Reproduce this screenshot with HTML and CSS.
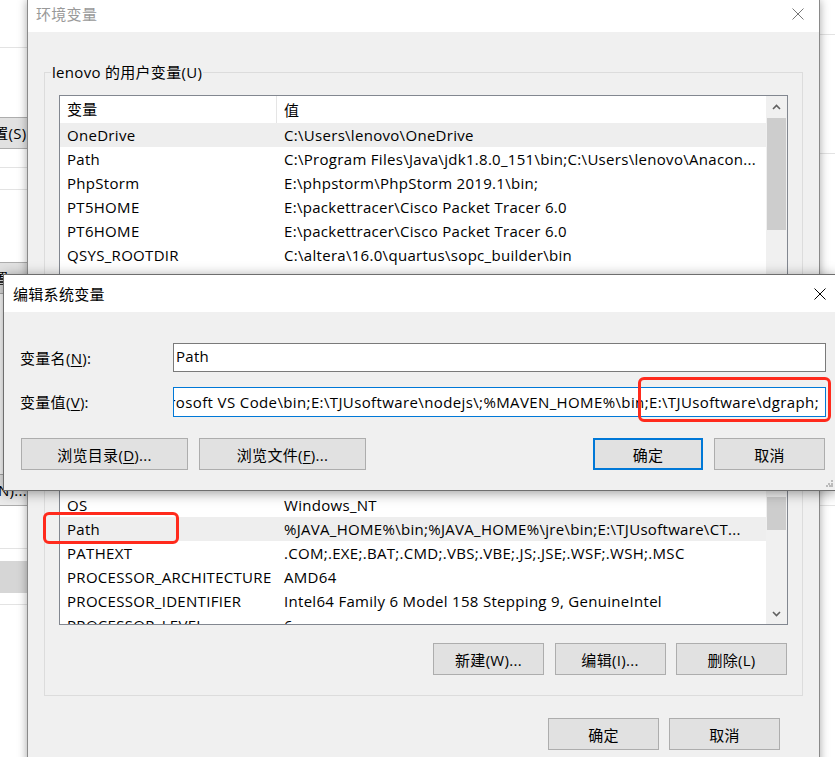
FILE: index.html
```html
<!DOCTYPE html>
<html lang="zh-CN">
<head>
  <meta charset="UTF-8">
  <title>环境变量</title>
  <link rel="stylesheet" href="styles.css">
</head>
<body>
  <!-- 系统属性 window, mostly hidden behind the dialogs -->
  <div class="backwin">
    <div class="back-left">
      <div class="bl-row bl-r1"></div>
      <div class="bl-gap bl-g1"></div>
      <div class="bl-btn"><span class="bl-s">设置(S)...</span></div>
      <div class="bl-row bl-r2"></div>
      <div class="bl-row bl-r3"></div>
      <div class="bl-gap bl-g2"></div>
      <div class="bl-btn"><span class="bl-s">设置(E)...</span></div>
      <div class="bl-gap bl-g3"></div>
      <div class="bl-btn bl-env"><span class="bl-n">环境变量(N)...</span></div>
      <div class="bl-row bl-r4"></div>
      <div class="bl-gap bl-g4"></div>
      <div class="bl-band"></div>
      <div class="bl-row bl-r5"></div>
    </div>
    <div class="back-right">
      <div class="br-row br-r1"></div>
      <div class="br-row br-r2"></div>
      <div class="br-row br-r3"></div>
    </div>
  </div>

  <!-- 环境变量 dialog -->
  <div class="envdlg">
    <div class="titlebar">
      <span class="title dim">环境变量</span>
      <svg class="close" width="12" height="12" viewBox="0 0 12 12"><path d="M0.5 0.5 L11.5 11.5 M11.5 0.5 L0.5 11.5" stroke="#777" stroke-width="1"/></svg>
    </div>

    <div class="group">
      <div class="group-title">lenovo 的用户变量(U)</div>
      <div class="listbox list-user">
        <div class="rows">
          <div class="row head"><div class="c1">变量</div><div class="c2">值</div></div>
          <div class="row sel"><div class="c1">OneDrive</div><div class="c2">C:\Users\lenovo\OneDrive</div></div>
          <div class="row"><div class="c1">Path</div><div class="c2">C:\Program Files\Java\jdk1.8.0_151\bin;C:\Users\lenovo\Anacon...</div></div>
          <div class="row"><div class="c1">PhpStorm</div><div class="c2">E:\phpstorm\PhpStorm 2019.1\bin;</div></div>
          <div class="row"><div class="c1">PT5HOME</div><div class="c2">E:\packettracer\Cisco Packet Tracer 6.0</div></div>
          <div class="row"><div class="c1">PT6HOME</div><div class="c2">E:\packettracer\Cisco Packet Tracer 6.0</div></div>
          <div class="row"><div class="c1">QSYS_ROOTDIR</div><div class="c2">C:\altera\16.0\quartus\sopc_builder\bin</div></div>
          <div class="row"><div class="c1">QUARTUS_ROOTDIR</div><div class="c2">C:\altera\16.0\quartus</div></div>
          <div class="row"><div class="c1">TEMP</div><div class="c2">C:\Users\lenovo\AppData\Local\Temp</div></div>
        </div>
        <div class="vscroll">
          <div class="arrow"><svg width="9" height="6" viewBox="0 0 9 6"><path d="M1 5 L4.5 1.5 L8 5" stroke="#606060" stroke-width="1.6" fill="none"/></svg></div>
          <div class="thumb thumb-user"></div>
        </div>
      </div>
      <div class="btnrow">
        <button class="btn">新建(N)...</button>
        <button class="btn">编辑(E)...</button>
        <button class="btn">删除(D)</button>
      </div>
    </div>

    <div class="group group-sys">
      <div class="group-title">系统变量(S)</div>
      <div class="listbox list-sys">
        <div class="rows">
          <div class="row head"><div class="c1">变量</div><div class="c2">值</div></div>
          <div class="row"><div class="c1">JAVA_HOME</div><div class="c2">C:\Program Files\Java\jdk1.8.0_151</div></div>
          <div class="row"><div class="c1">NUMBER_OF_PROCESSORS</div><div class="c2">4</div></div>
          <div class="row"><div class="c1">OS</div><div class="c2">Windows_NT</div></div>
          <div class="row sel"><div class="c1">Path</div><div class="c2">%JAVA_HOME%\bin;%JAVA_HOME%\jre\bin;E:\TJUsoftware\CT...</div></div>
          <div class="row"><div class="c1">PATHEXT</div><div class="c2">.COM;.EXE;.BAT;.CMD;.VBS;.VBE;.JS;.JSE;.WSF;.WSH;.MSC</div></div>
          <div class="row"><div class="c1">PROCESSOR_ARCHITECTURE</div><div class="c2">AMD64</div></div>
          <div class="row"><div class="c1">PROCESSOR_IDENTIFIER</div><div class="c2">Intel64 Family 6 Model 158 Stepping 9, GenuineIntel</div></div>
          <div class="row"><div class="c1">PROCESSOR_LEVEL</div><div class="c2">6</div></div>
        </div>
        <div class="vscroll">
          <div class="arrow"><svg width="9" height="6" viewBox="0 0 9 6"><path d="M1 5 L4.5 1.5 L8 5" stroke="#606060" stroke-width="1.6" fill="none"/></svg></div>
          <div class="thumb thumb-sys"></div>
          <div class="arrow arrow-down"><svg width="9" height="6" viewBox="0 0 9 6"><path d="M1 1 L4.5 4.5 L8 1" stroke="#606060" stroke-width="1.6" fill="none"/></svg></div>
        </div>
      </div>
      <div class="btnrow">
        <button class="btn">新建(W)...</button>
        <button class="btn">编辑(I)...</button>
        <button class="btn">删除(L)</button>
      </div>
    </div>

    <div class="dlg-buttons">
      <button class="btn">确定</button>
      <button class="btn">取消</button>
    </div>
  </div>

  <!-- 编辑系统变量 dialog -->
  <div class="editdlg">
    <div class="titlebar edit-titlebar">
      <span class="title">编辑系统变量</span>
      <svg class="close" width="12" height="12" viewBox="0 0 12 12"><path d="M0.5 0.5 L11.5 11.5 M11.5 0.5 L0.5 11.5" stroke="#000" stroke-width="1"/></svg>
    </div>
    <div class="editbody">
      <div class="field">
        <label class="field-label">变量名(<u>N</u>):</label>
        <div class="textbox"><span>Path</span></div>
      </div>
      <div class="field field-value">
        <label class="field-label">变量值(<u>V</u>):</label>
        <div class="textbox focused"><span>C:\Program Files\Microsoft VS Code\bin;E:\TJUsoftware\nodejs\;%MAVEN_HOME%\bin;E:\TJUsoftware\dgraph;</span></div>
      </div>
      <div class="edit-buttons">
        <button class="btn wide">浏览目录(<u>D</u>)...</button>
        <button class="btn wide">浏览文件(<u>F</u>)...</button>
        <button class="btn ok default">确定</button>
        <button class="btn ok">取消</button>
      </div>
    </div>
    <svg class="grip" width="7" height="7" viewBox="0 0 7 7"><rect x="5" y="0" width="2" height="2" fill="#bbb"/><rect x="2" y="3" width="2" height="2" fill="#bbb"/><rect x="5" y="3" width="2" height="2" fill="#bbb"/><rect x="0" y="5" width="2" height="2" fill="#bbb"/><rect x="3" y="5" width="2" height="2" fill="#bbb"/><rect x="5" y="5" width="2" height="2" fill="#bbb"/></svg>
  </div>

  <!-- red annotations -->
  <div class="mark mark-value"></div>
  <div class="mark mark-path"></div>
</body>
</html>
```

FILE: styles.css
```css
* {
  margin: 0;
  padding: 0;
  box-sizing: border-box;
}

html, body {
  width: 835px;
  height: 757px;
  overflow: hidden;
}

body {
  position: relative;
  font-family: "Open Sans", "Noto Sans CJK SC", sans-serif;
  font-size: 15px;
  line-height: 20px;
  letter-spacing: 0.3px;
  color: #000;
  background: #fff;
}

u {
  text-decoration: underline;
  text-underline-offset: 2px;
}

/* ---- window behind ---- */
.backwin {
  position: absolute;
  left: 0;
  top: 0;
  width: 835px;
  height: 757px;
  background: #fff;
  display: flex;
  justify-content: space-between;
}

.back-left {
  width: 40px;
  display: flex;
  flex-direction: column;
  overflow: hidden;
}

.bl-row {
  border-bottom: 1px solid #e3e3e3;
  flex-shrink: 0;
}
.bl-gap { flex-shrink: 0; }

.bl-r1 { height: 48px; }
.bl-g1 { height: 69px; }
.bl-r2 { height: 19px; }
.bl-r3 { height: 22px; }
.bl-g2 { height: 72px; }
.bl-g3 { height: 180px; }
.bl-r4 { height: 43px; }
.bl-g4 { height: 12px; }
.bl-r5 { height: 12px; }

.bl-btn {
  height: 32px;
  flex-shrink: 0;
  background: #e1e1e1;
  border-top: 1px solid #adadad;
  border-bottom: 1px solid #adadad;
  line-height: 30px;
  white-space: nowrap;
}
.bl-s { margin-left: -22px; }
.bl-env {
  height: 32px;
  background: #ececec;
}
.bl-n { margin-left: -68px; }

.bl-band {
  height: 32px;
  flex-shrink: 0;
  background: #d6d6d6;
}

.back-right {
  width: 20px;
  display: flex;
  flex-direction: column;
}
.br-row {
  border-bottom: 1px solid #e3e3e3;
  flex-shrink: 0;
}
.br-r1 { height: 35px; }
.br-r2 { height: 119px; }
.br-r3 { height: 352px; }

/* ---- shared dialog parts ---- */
.titlebar {
  height: 32px;
  background: #fff;
  display: flex;
  align-items: center;
  justify-content: space-between;
  padding: 0 15px 5px 8px;
}
.title.dim { color: #999; }

.btn {
  font-family: inherit;
  font-size: 15px;
  letter-spacing: 0.3px;
  color: #000;
  background: #e1e1e1;
  border: 1px solid #adadad;
  width: 111px;
  height: 32px;
  flex-shrink: 0;
}

/* ---- 环境变量 ---- */
.envdlg {
  position: absolute;
  left: 27px;
  top: 0;
  width: 793px;
  height: 770px;
  background: #f0f0f0;
  border-left: 1px solid #8a8a8a;
  border-right: 1px solid #8a8a8a;
  box-shadow: 0 0 9px rgba(0, 0, 0, 0.35);
}

.group {
  margin: 40px 16px 0 16px;
  border: 1px solid #dcdcdc;
  padding: 0 14px 20px 14px;
}
.group-sys { margin-top: 23px; }

.group-title {
  width: fit-content;
  margin: -11px 0 0 -8px;
  padding: 0 1px;
  background: #f0f0f0;
}

.listbox {
  margin-top: 13px;
  background: #fff;
  border: 1px solid #828790;
  display: flex;
  overflow: hidden;
}
.list-user { height: 205px; }
.list-sys { height: 208px; }

.rows {
  flex: 1;
  overflow: hidden;
}

.row {
  display: flex;
  height: 24px;
  align-items: center;
  white-space: nowrap;
}
.row.head { height: 27px; }
.row.sel { background: #eeeeee; }

.c1 {
  width: 217px;
  flex-shrink: 0;
  padding-left: 7px;
  overflow: hidden;
}
.head .c1 {
  height: 27px;
  line-height: 27px;
  border-right: 1px solid #e5e5e5;
}
.c2 {
  padding-left: 7px;
  overflow: hidden;
}

.vscroll {
  width: 21px;
  flex-shrink: 0;
  background: #f0f0f0;
  display: flex;
  flex-direction: column;
}
.arrow {
  height: 21px;
  flex-shrink: 0;
  display: flex;
  align-items: center;
  justify-content: center;
}
.arrow-down { margin-top: auto; }
.thumb {
  margin: 0 1px;
  background: #cdcdcd;
  flex-shrink: 0;
}
.thumb-user { margin-top: 1px; height: 112px; }
.thumb-sys { margin-top: 58px; height: 33px; }

.btnrow {
  margin: 18px 1px 0 0;
  display: flex;
  justify-content: flex-end;
  gap: 10.5px;
}

.dlg-buttons {
  margin: 22px 39px 0 0;
  display: flex;
  justify-content: flex-end;
  gap: 10px;
}

/* ---- 编辑系统变量 ---- */
.editdlg {
  position: absolute;
  left: 3px;
  top: 274px;
  width: 834px;
  height: 217px;
  background: #f0f0f0;
  border: 1px solid #6e6e6e;
  box-shadow: 0 2px 12px rgba(0, 0, 0, 0.4);
}
.edit-titlebar {
  height: 37px;
  padding: 0 10px 0 9px;
}

.editbody {
  padding: 31px 10px 0 16px;
}

.field {
  display: flex;
  align-items: center;
}
.field-value { margin-top: 15px; }

.field-label {
  width: 153px;
  flex-shrink: 0;
}

.textbox {
  flex: 1;
  height: 29px;
  background: #fff;
  border: 1px solid #7a7a7a;
  padding: 0 2px 3px 2px;
  display: flex;
  align-items: center;
  white-space: nowrap;
  overflow: hidden;
}
.textbox.focused {
  height: 30px;
  border-color: #0078d7;
  justify-content: flex-end;
  padding: 0 6px 1px 2px;
  letter-spacing: 0.38px;
}
.textbox.focused span { flex-shrink: 0; }

.edit-buttons {
  margin: 21px 1px 0 1px;
  display: flex;
  gap: 11px;
}
.btn.wide { width: 167px; }
.btn.ok { width: 111px; }
.edit-buttons .btn.default {
  margin-left: auto;
  width: 110px;
  border: 2px solid #0078d7;
}

.grip {
  position: absolute;
  right: 3px;
  bottom: 3px;
}

/* ---- red annotation boxes ---- */
.mark {
  position: absolute;
  border: 3px solid #ff2a1c;
  border-radius: 6px;
}
.mark-value {
  left: 638px;
  top: 377px;
  width: 193px;
  height: 45px;
}
.mark-path {
  left: 43px;
  top: 512px;
  width: 136px;
  height: 32px;
}
```
